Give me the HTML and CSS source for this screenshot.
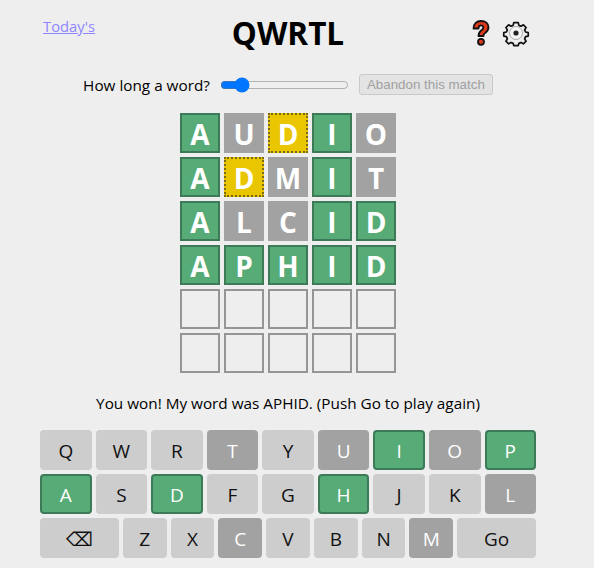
FILE: index.html
```html
<!DOCTYPE html>
<html lang="en">

<head>
    <meta charset="UTF-8">
    <meta name="viewport" content="width=device-width, initial-scale=1.0">
    <title>QWRTL</title>
    <link rel="stylesheet" href="styles.css">
</head>

<body>
    <div class="app">
        <header class="top-bar">
            <a class="today-link" href="#">Today's</a>
            <h1 class="title">QWRTL</h1>
            <div class="top-icons">
                <svg class="icon-help" width="20" height="28" viewBox="0 0 20 28" aria-label="Help">
                    <path d="M2.500 9.500C2.500 4.500 5.800 2 10 2c4.500 0 7.500 2.600 7.500 6.300 0 2.900-1.500 4.300-3.300 5.600-1.300 1-1.700 1.600-1.700 3.100H7.500c0-2.900.9-4.300 2.700-5.600 1.300-.9 2.100-1.600 2.100-3 0-1.200-.9-2-2.300-2-1.500 0-2.400 1-2.500 3.100z" fill="#dd3a1c" stroke="#111" stroke-width="1.800" stroke-linejoin="round" />
                    <circle cx="10" cy="22.800" r="3" fill="#dd3a1c" stroke="#111" stroke-width="1.800" />
                </svg>
                <svg class="icon-gear" width="28" height="28" viewBox="0 0 28 28" aria-label="Settings">
                    <path d="M11.500 2.500h5l.7 3 2.400 1 2.600-1.600 3 3-1.600 2.600 1 2.400 3 .7v3.800l-3 .7-1 2.400 1.600 2.600-3 3-2.600-1.600-2.400 1-.7 2.500h-5l-.7-2.500-2.400-1-2.600 1.600-3-3 1.600-2.600-1-2.400-3-.7v-3.800l3-.7 1-2.400-1.600-2.600 3-3 2.600 1.600 2.400-1z" fill="#eee" stroke="#111" stroke-width="1.900" stroke-linejoin="round" transform="translate(1.400 1.400) scale(.9)" />
                    <circle cx="14" cy="14" r="6.500" fill="#f4f4f4" stroke="#aaa" stroke-width="1" />
                    <circle cx="14" cy="14" r="2.600" fill="#222" />
                </svg>
            </div>
        </header>

        <div class="controls">
            <label class="length-label" for="wordLength">How long a word?</label>
            <input class="length-slider" type="range" id="wordLength" min="4" max="12" value="5">
            <button class="abandon-btn" disabled>Abandon this match</button>
        </div>

        <div class="board">
            <div class="tile correct">A</div>
            <div class="tile absent">U</div>
            <div class="tile present">D</div>
            <div class="tile correct">I</div>
            <div class="tile absent">O</div>

            <div class="tile correct">A</div>
            <div class="tile present">D</div>
            <div class="tile absent">M</div>
            <div class="tile correct">I</div>
            <div class="tile absent">T</div>

            <div class="tile correct">A</div>
            <div class="tile absent">L</div>
            <div class="tile absent">C</div>
            <div class="tile correct">I</div>
            <div class="tile correct">D</div>

            <div class="tile correct">A</div>
            <div class="tile correct">P</div>
            <div class="tile correct">H</div>
            <div class="tile correct">I</div>
            <div class="tile correct">D</div>

            <div class="tile"></div>
            <div class="tile"></div>
            <div class="tile"></div>
            <div class="tile"></div>
            <div class="tile"></div>

            <div class="tile"></div>
            <div class="tile"></div>
            <div class="tile"></div>
            <div class="tile"></div>
            <div class="tile"></div>
        </div>

        <p class="message">You won! My word was APHID. (Push Go to play again)</p>

        <div class="keyboard">
            <div class="key-row">
                <button class="key">Q</button>
                <button class="key">W</button>
                <button class="key">R</button>
                <button class="key absent">T</button>
                <button class="key">Y</button>
                <button class="key absent">U</button>
                <button class="key correct">I</button>
                <button class="key absent">O</button>
                <button class="key correct">P</button>
            </div>
            <div class="key-row">
                <button class="key correct">A</button>
                <button class="key">S</button>
                <button class="key correct">D</button>
                <button class="key">F</button>
                <button class="key">G</button>
                <button class="key correct">H</button>
                <button class="key">J</button>
                <button class="key">K</button>
                <button class="key absent">L</button>
            </div>
            <div class="key-row">
                <button class="key wide">⌫</button>
                <button class="key">Z</button>
                <button class="key">X</button>
                <button class="key absent">C</button>
                <button class="key">V</button>
                <button class="key">B</button>
                <button class="key">N</button>
                <button class="key absent">M</button>
                <button class="key wide">Go</button>
            </div>
        </div>
    </div>
</body>

</html>
```

FILE: styles.css
```css
html {
    background-color: #eeeeee;
}

body {
    font-family: "Open Sans", "Noto Sans", sans-serif;
    background-color: #eeeeee;
    color: #000;
    margin: 0;
    height: 568px;
    overflow: hidden;
}

.app {
    width: 496px;
    margin-left: 40px;
}

.top-bar {
    display: grid;
    grid-template-columns: 1fr auto 1fr;
    height: 67px;
}

.today-link {
    color: #8f86ff;
    font-size: 14.8px;
    line-height: 20px;
    margin: 16px 0 0 3px;
    justify-self: start;
}

.title {
    font-size: 31.5px;
    font-weight: 700;
    line-height: 44px;
    margin: 11px 0 0;
}

.top-icons {
    display: flex;
    justify-content: flex-end;
    align-items: center;
    gap: 11px;
    padding: 0 6px 2px 0;
}

.controls {
    display: flex;
    align-items: center;
    justify-content: center;
    height: 36px;
}

.length-label {
    font-size: 15.3px;
    margin-right: 10px;
}

.length-slider {
    width: 129px;
    height: 16px;
    margin: 0 10px 0 0;
}

.abandon-btn {
    font-family: "Liberation Sans", Arial, sans-serif;
    font-size: 13.33px;
    width: 134px;
    height: 21px;
    padding: 0;
    margin-bottom: 1px;
    color: #a0a0a0;
    background-color: #e3e3e3;
    border: 1px solid #c9c9c9;
    border-radius: 3px;
}

.board {
    display: grid;
    grid-template-columns: repeat(5, 40px);
    grid-auto-rows: 40px;
    gap: 4px;
    justify-content: center;
    margin-top: 10px;
}

.tile {
    box-sizing: border-box;
    display: flex;
    align-items: center;
    justify-content: center;
    padding-top: 1px;
    border: 2px solid #959595;
    font-size: 28px;
    font-weight: 700;
    color: #fff;
}

.tile.correct {
    background-color: #57ab77;
    border-color: #3d7a58;
}

.tile.absent {
    background-color: #a2a2a2;
    border-color: #a2a2a2;
}

.tile.present {
    background-color: #eac600;
    border: 2px dotted #7a6a10;
}

.message {
    font-size: 15.3px;
    line-height: 20px;
    text-align: center;
    margin: 20px 0 0;
}

.keyboard {
    display: flex;
    flex-direction: column;
    gap: 4px;
    margin-top: 17px;
}

.key-row {
    display: flex;
    gap: 4px;
}

.key {
    box-sizing: border-box;
    flex: 1 1 0;
    min-width: 0;
    height: 40px;
    padding: 2px 0 0;
    font-family: inherit;
    font-size: 19px;
    color: #111;
    background-color: #cdcdcd;
    border: 2px solid transparent;
    border-radius: 4px;
}

.key.wide {
    flex-grow: 1.88;
}

.key.correct {
    color: #fff;
    background-color: #57ab77;
    border-color: #3d7a58;
}

.key.absent {
    color: #fff;
    background-color: #a2a2a2;
}
```
